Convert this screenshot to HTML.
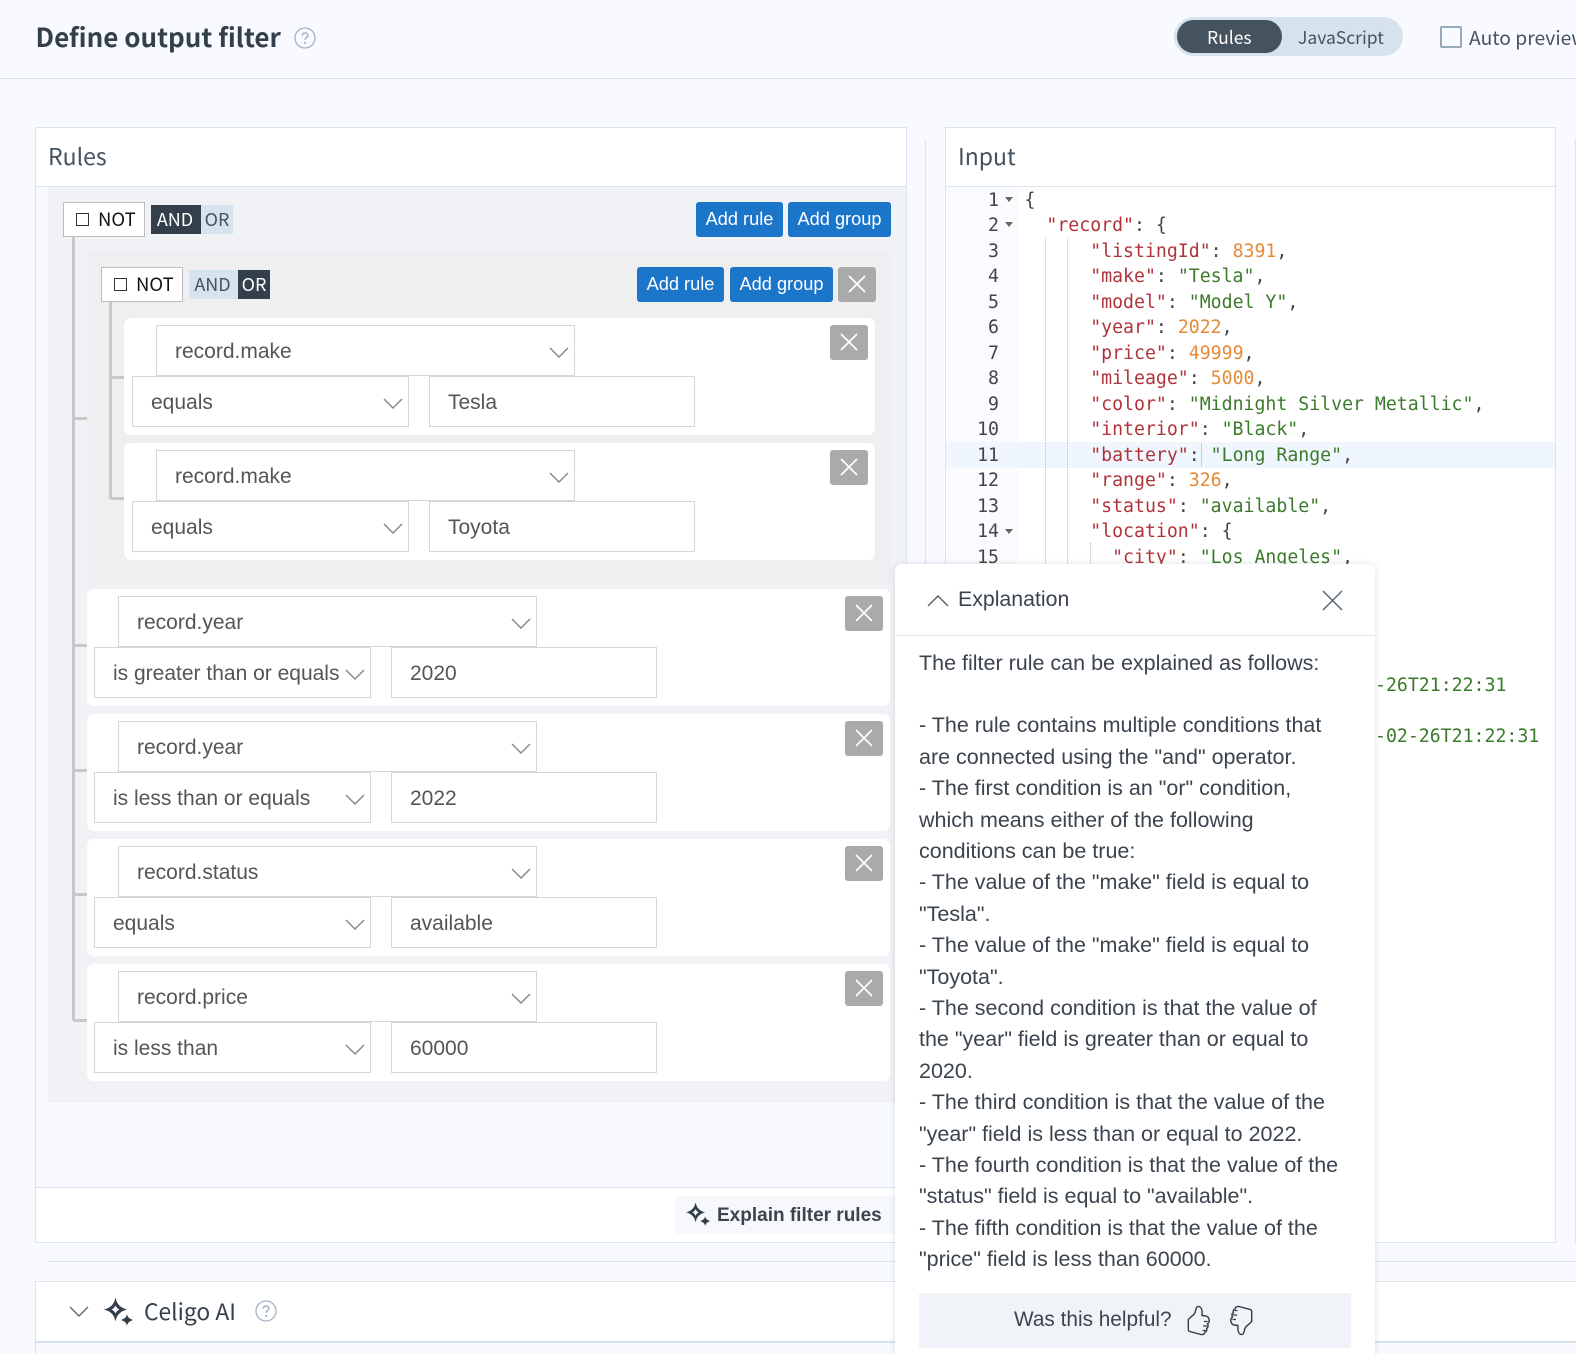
<!DOCTYPE html>
<html><head><meta charset="utf-8"><style>
*{box-sizing:border-box}
html,body{margin:0;padding:0;width:1576px;height:1354px;overflow:hidden;background:#f8faff}
body{position:relative;font-family:"Liberation Sans",sans-serif;color:#333d47}
.a{position:absolute;white-space:nowrap}
.ss{font-family:"Noto Sans CJK SC","Liberation Sans",sans-serif}
.b{background:#1b75c9;color:#fff;border-radius:3px;font-size:18.2px;text-align:center;height:35px;line-height:35px}
.x{background:#aaa;border-radius:3px;width:38px;height:35px}
.x svg{position:absolute;left:9px;top:7px}
.not{background:#fff;border:1px solid #bdbdbd;width:82px;height:35px;font-family:"Noto Sans CJK SC",sans-serif;font-size:18.5px;line-height:33px;color:#111;padding-left:34px}
.not i{position:absolute;left:12px;top:10px;width:13px;height:13px;border:1.3px solid #333}
.op{height:29px;line-height:28px;font-size:18px;text-align:center;font-family:"Noto Sans CJK SC",sans-serif}
.on{background:#333f4b;color:#fff}.off{background:#d6e4ee;color:#45535f}
.card{position:absolute;background:#fff;border-radius:7px;height:117px}
.f{position:absolute;background:#fff;border:1px solid #d6d6d6;height:51px;line-height:51px;font-size:21px;color:#555;padding-left:18px;white-space:nowrap}
.f svg{position:absolute;right:5px;top:21px}
.line{position:absolute;background:#c8c8c8}
.code{font-family:"DejaVu Sans Mono","Liberation Mono",monospace;font-size:18.2px;line-height:25.5px;color:#444;white-space:pre;left:1024.5px;top:187.5px;height:376px;overflow:hidden;width:525px}
.k{color:#b0333a}.s{color:#3c7a2c}.n{color:#e68a38}
.nums{font-family:"DejaVu Sans Mono","Liberation Mono",monospace;font-size:18.2px;line-height:25.5px;color:#444;text-align:right;white-space:pre;left:946px;width:53px;top:187.5px;height:376px;overflow:hidden}
.tri{width:0;height:0;border-left:4.5px solid transparent;border-right:4.5px solid transparent;border-top:5px solid #666}
.g{width:0;border-left:1px dotted #bbb}
.exp{font-size:21.5px;line-height:31.4px;color:#3b444e;left:919px;top:647.5px;white-space:pre}
</style></head><body>
<svg width="0" height="0" style="position:absolute"><defs>
<symbol id="c" viewBox="0 0 20 11"><path d="M1 1l9 9 9-9" fill="none" stroke="#8a8a8a" stroke-width="1.5"/></symbol>
<symbol id="cx" viewBox="0 0 20 20"><path d="M2 2l16 16M18 2L2 18" fill="none" stroke="#fff" stroke-width="1.7"/></symbol>
<symbol id="spark" viewBox="0 0 30 30"><path fill-rule="evenodd" d="M11.500 .5C12.800 7 15.800 10.500 23 12.500 15.800 14.500 12.800 18 11.500 24.500 10.200 18 7.200 14.500 0 12.500 7.200 10.500 10.200 7 11.500 .5ZM11.500 8.500C10.800 10.200 9.500 11.600 7.600 12.500 9.500 13.400 10.800 14.800 11.500 16.500 12.200 14.800 13.500 13.400 15.400 12.500 13.500 11.600 12.200 10.200 11.500 8.500Z" fill="#333f4b"/><path d="M23 17C23.500 20 24.800 21.400 29 23 24.800 24.600 23.500 26 23 29 22.500 26 21.200 24.600 17 23 21.200 21.400 22.500 20 23 17Z" fill="#333f4b"/></symbol>
<symbol id="help" viewBox="0 0 22 22"><circle cx="11" cy="11" r="10" fill="none" stroke="#9fb3c4" stroke-width="1.300"/><path d="M8.300 8.600c0-1.600 1.200-2.600 2.800-2.600s2.800 1 2.800 2.400c0 2.200-2.800 2.200-2.800 4.400" fill="none" stroke="#9fb3c4" stroke-width="1.600"/><circle cx="11.100" cy="15.800" r="1.100" fill="#9fb3c4"/></symbol>
<symbol id="thumb" viewBox="0 0 24 31"><path d="M1.300 14.500V24.500Q1.300 26.500 4 26.800L14 29.500Q17.500 30 18 27Q20.500 26 19.500 23.500Q22 22 20.500 19Q23.500 16 21.500 13Q21 11.500 19 11L15 10.500Q15.500 5 14 3Q12 .5 10 2Q9 3 8.500 6Q8 9 5 11Z" fill="none" stroke="#333d47" stroke-width="1.400" stroke-linejoin="round"/><path d="M17 16.500h3.500M16 21h4M15.500 25.500h3" fill="none" stroke="#333d47" stroke-width="1.200"/></symbol>
</defs></svg>

<!-- header -->
<div style="position:absolute;left:0;top:78px;width:1576px;height:1px;background:#dbe5ec"></div>
<div class="a ss" style="left:35.500px;top:16px;font-size:26px;font-weight:700;line-height:42px;color:#333f4b">Define output filter</div>
<svg style="position:absolute;left:294px;top:27px" width="22" height="22"><use href="#help"/></svg>
<div style="position:absolute;left:1174px;top:17px;width:229px;height:39px;border-radius:20px;background:#d6e3ec"></div>
<div style="position:absolute;left:1177px;top:20px;width:105px;height:33px;border-radius:17px;background:#45535f"></div>
<div class="a ss" style="left:1207px;top:24px;font-size:17.5px;line-height:27px;color:#fff">Rules</div>
<div class="a ss" style="left:1298px;top:24px;font-size:17.5px;line-height:27px;color:#45535f">JavaScript</div>
<div style="position:absolute;left:1440px;top:26px;width:22px;height:22px;border:2px solid #96aabb;border-radius:2px;background:#f8faff"></div>
<div class="a ss" style="left:1469px;top:22px;font-size:19.300px;line-height:30px;color:#45535f">Auto preview</div>

<!-- rules panel -->
<div style="position:absolute;left:35px;top:127px;width:872px;height:1116px;background:#f8faff;border:1px solid #dbe5ec"></div>
<div style="position:absolute;left:36px;top:128px;width:870px;height:59px;background:#fff;border-bottom:1px solid #dbe5ec"></div>
<div class="a ss" style="left:48px;top:137px;font-size:23px;line-height:36px;color:#45535f">Rules</div>
<div style="position:absolute;left:48px;top:187px;width:858px;height:916px;background:#f1f2f5"></div>
<div style="position:absolute;left:87px;top:252px;width:804px;height:333px;background:#efeff1"></div>
<div style="position:absolute;left:36px;top:1187px;width:870px;height:55px;background:#fff;border-top:1px solid #dbe5ec"></div>

<!-- connectors -->
<div class="line" style="left:72px;top:236px;width:3px;height:784px"></div>
<div class="line" style="left:72px;top:1019px;width:15px;height:3px;border-bottom-left-radius:3px"></div>
<div class="line" style="left:74px;top:417px;width:13px;height:3px"></div>
<div class="line" style="left:74px;top:644px;width:14px;height:3px"></div>
<div class="line" style="left:74px;top:769px;width:14px;height:3px"></div>
<div class="line" style="left:74px;top:893px;width:14px;height:3px"></div>
<div class="line" style="left:109px;top:300px;width:3px;height:198px"></div>
<div class="line" style="left:109px;top:497px;width:15px;height:3px;border-bottom-left-radius:3px"></div>
<div class="line" style="left:111px;top:376px;width:13px;height:3px"></div>

<!-- root toolbar -->
<div class="a not" style="left:63px;top:202px"><i></i>NOT</div>
<div class="a op on" style="left:151px;top:205px;width:50px;padding-right:2px">AND</div>
<div class="a op off" style="left:201px;top:205px;width:32px">OR</div>
<div class="a b" style="left:696px;top:202px;width:87px">Add rule</div>
<div class="a b" style="left:788px;top:202px;width:103px">Add group</div>

<!-- inner toolbar -->
<div class="a not" style="left:101px;top:267px"><i></i>NOT</div>
<div class="a op off" style="left:189px;top:270px;width:49px;padding-right:2px">AND</div>
<div class="a op on" style="left:238px;top:270px;width:32px">OR</div>
<div class="a b" style="left:637px;top:267px;width:87px">Add rule</div>
<div class="a b" style="left:730px;top:267px;width:103px">Add group</div>
<div class="x" style="position:absolute;left:838px;top:267px"><svg width="20" height="20"><use href="#cx"/></svg></div>

<!-- inner cards -->
<div class="card" style="left:124px;top:318px;width:751px">
 <div class="f" style="left:32px;top:7px;width:419px">record.make<svg width="20" height="11"><use href="#c"/></svg></div>
 <div class="f" style="left:8px;top:58px;width:277px">equals<svg width="20" height="11"><use href="#c"/></svg></div>
 <div class="f" style="left:305px;top:58px;width:266px">Tesla</div>
 <div class="x" style="position:absolute;left:706px;top:7px"><svg width="20" height="20"><use href="#cx"/></svg></div>
</div>
<div class="card" style="left:124px;top:443px;width:751px">
 <div class="f" style="left:32px;top:7px;width:419px">record.make<svg width="20" height="11"><use href="#c"/></svg></div>
 <div class="f" style="left:8px;top:58px;width:277px">equals<svg width="20" height="11"><use href="#c"/></svg></div>
 <div class="f" style="left:305px;top:58px;width:266px">Toyota</div>
 <div class="x" style="position:absolute;left:706px;top:7px"><svg width="20" height="20"><use href="#cx"/></svg></div>
</div>

<!-- outer cards -->
<div class="card" style="left:87px;top:589px;width:803px">
 <div class="f" style="left:31px;top:7px;width:419px">record.year<svg width="20" height="11"><use href="#c"/></svg></div>
 <div class="f" style="left:7px;top:58px;width:277px">is greater than or equals<svg width="20" height="11"><use href="#c"/></svg></div>
 <div class="f" style="left:304px;top:58px;width:266px">2020</div>
 <div class="x" style="position:absolute;left:758px;top:7px"><svg width="20" height="20"><use href="#cx"/></svg></div>
</div>
<div class="card" style="left:87px;top:714px;width:803px">
 <div class="f" style="left:31px;top:7px;width:419px">record.year<svg width="20" height="11"><use href="#c"/></svg></div>
 <div class="f" style="left:7px;top:58px;width:277px">is less than or equals<svg width="20" height="11"><use href="#c"/></svg></div>
 <div class="f" style="left:304px;top:58px;width:266px">2022</div>
 <div class="x" style="position:absolute;left:758px;top:7px"><svg width="20" height="20"><use href="#cx"/></svg></div>
</div>
<div class="card" style="left:87px;top:839px;width:803px">
 <div class="f" style="left:31px;top:7px;width:419px">record.status<svg width="20" height="11"><use href="#c"/></svg></div>
 <div class="f" style="left:7px;top:58px;width:277px">equals<svg width="20" height="11"><use href="#c"/></svg></div>
 <div class="f" style="left:304px;top:58px;width:266px">available</div>
 <div class="x" style="position:absolute;left:758px;top:7px"><svg width="20" height="20"><use href="#cx"/></svg></div>
</div>
<div class="card" style="left:87px;top:964px;width:803px">
 <div class="f" style="left:31px;top:7px;width:419px">record.price<svg width="20" height="11"><use href="#c"/></svg></div>
 <div class="f" style="left:7px;top:58px;width:277px">is less than<svg width="20" height="11"><use href="#c"/></svg></div>
 <div class="f" style="left:304px;top:58px;width:266px">60000</div>
 <div class="x" style="position:absolute;left:758px;top:7px"><svg width="20" height="20"><use href="#cx"/></svg></div>
</div>

<!-- explain button -->
<div style="position:absolute;left:675px;top:1196px;width:225px;height:38px;background:#f6f8fb;border-radius:3px"></div>
<svg style="position:absolute;left:686px;top:1202px" width="25" height="25"><use href="#spark"/></svg>
<div class="a" style="left:717px;top:1201px;font-size:19px;font-weight:bold;line-height:30px;color:#3b444e">Explain filter rules</div>

<!-- input panel -->
<div style="position:absolute;left:925px;top:139px;width:1px;height:1104px;background:#dbe5ec"></div>
<div style="position:absolute;left:1575px;top:139px;width:1px;height:1104px;background:#dbe5ec"></div>
<div style="position:absolute;left:945px;top:127px;width:611px;height:1116px;background:#fff;border:1px solid #dbe5ec"></div>
<div style="position:absolute;left:946px;top:186px;width:609px;height:1px;background:#dbe5ec"></div>
<div class="a ss" style="left:958px;top:137px;font-size:23px;line-height:36px;color:#45535f">Input</div>
<div style="position:absolute;left:946px;top:187px;width:72px;height:377px;background:#f9fbfe"></div>
<div style="position:absolute;left:946px;top:442px;width:609px;height:26px;background:#f0f6fd"></div>
<div class="g" style="position:absolute;left:1045px;top:238px;height:325px"></div>
<div class="g" style="position:absolute;left:1067px;top:238px;height:325px"></div>
<div class="g" style="position:absolute;left:1090px;top:543px;height:20px"></div>
<div style="position:absolute;left:1201px;top:443px;width:1px;height:24px;background:#ccc"></div>
<div class="a nums">1
2
3
4
5
6
7
8
9
10
11
12
13
14
15</div>
<div class="tri" style="position:absolute;left:1005px;top:197px"></div>
<div class="tri" style="position:absolute;left:1005px;top:222px"></div>
<div class="tri" style="position:absolute;left:1005px;top:529px"></div>
<div class="a code">{
  <span class="k">"record"</span>: {
      <span class="k">"listingId"</span>: <span class="n">8391</span>,
      <span class="k">"make"</span>: <span class="s">"Tesla"</span>,
      <span class="k">"model"</span>: <span class="s">"Model Y"</span>,
      <span class="k">"year"</span>: <span class="n">2022</span>,
      <span class="k">"price"</span>: <span class="n">49999</span>,
      <span class="k">"mileage"</span>: <span class="n">5000</span>,
      <span class="k">"color"</span>: <span class="s">"Midnight Silver Metallic"</span>,
      <span class="k">"interior"</span>: <span class="s">"Black"</span>,
      <span class="k">"battery"</span>: <span class="s">"Long Range"</span>,
      <span class="k">"range"</span>: <span class="n">326</span>,
      <span class="k">"status"</span>: <span class="s">"available"</span>,
      <span class="k">"location"</span>: {
        <span class="k">"city"</span>: <span class="s">"Los Angeles"</span>,</div>
<div class="a" style="left:1375px;top:673px;font-family:'DejaVu Sans Mono',monospace;font-size:18.2px;line-height:25.5px;color:#3c7a2c">-26T21:22:31</div>
<div class="a" style="left:1375px;top:724px;font-family:'DejaVu Sans Mono',monospace;font-size:18.2px;line-height:25.5px;color:#3c7a2c">-02-26T21:22:31</div>

<!-- Celigo AI -->
<div style="position:absolute;left:47px;top:1261px;width:1529px;height:1px;background:#dbe5ec"></div>
<div style="position:absolute;left:35px;top:1281px;width:1541px;height:62px;background:#fff;border:1px solid #dbe5ec;border-right:0;border-bottom:2px solid #d6e1ea"></div>
<div style="position:absolute;left:35px;top:1343px;width:1px;height:11px;background:#dbe5ec"></div>
<svg style="position:absolute;left:69px;top:1306px" width="20" height="11"><path d="M1 1l9 9 9-9" fill="none" stroke="#666" stroke-width="1.400"/></svg>
<svg style="position:absolute;left:104px;top:1297px" width="30" height="30"><use href="#spark"/></svg>
<div class="a ss" style="left:144px;top:1293px;font-size:22.8px;line-height:36px;color:#333f4b">Celigo AI</div>
<svg style="position:absolute;left:255px;top:1300px" width="22" height="22"><use href="#help"/></svg>

<!-- explanation -->
<div style="position:absolute;left:895px;top:564px;width:480px;height:800px;background:#fff;border-radius:6px 6px 0 0;box-shadow:0 0 6px rgba(60,80,100,.18)"></div>
<div style="position:absolute;left:895px;top:635px;width:480px;height:1px;background:#dbe5ec"></div>
<svg style="position:absolute;left:927px;top:594px" width="22" height="13"><path d="M1 12l10-10 10 10" fill="none" stroke="#555f69" stroke-width="1.400"/></svg>
<div class="a" style="left:958px;top:584px;font-size:21.3px;line-height:30px;color:#3b444e">Explanation</div>
<svg style="position:absolute;left:1322px;top:590px" width="21" height="21"><path d="M1 1l19 19M20 1L1 20" fill="none" stroke="#5b6874" stroke-width="1.500"/></svg>
<div class="a exp">The filter rule can be explained as follows:

- The rule contains multiple conditions that
are connected using the "and" operator.
- The first condition is an "or" condition,
which means either of the following
conditions can be true:
- The value of the "make" field is equal to
"Tesla".
- The value of the "make" field is equal to
"Toyota".
- The second condition is that the value of
the "year" field is greater than or equal to
2020.
- The third condition is that the value of the
"year" field is less than or equal to 2022.
- The fourth condition is that the value of the
"status" field is equal to "available".
- The fifth condition is that the value of the
"price" field is less than 60000.</div>
<div style="position:absolute;left:919px;top:1293px;width:432px;height:55px;background:#f0f4f8"></div>
<div class="a" style="left:1014px;top:1305px;font-size:20.800px;line-height:30px;color:#3b444e">Was this helpful?</div>
<svg style="position:absolute;left:1187px;top:1305px" width="24" height="31"><use href="#thumb"/></svg>
<svg style="position:absolute;left:1229px;top:1305px;transform:rotate(180deg)" width="24" height="31"><use href="#thumb"/></svg>
</body></html>
